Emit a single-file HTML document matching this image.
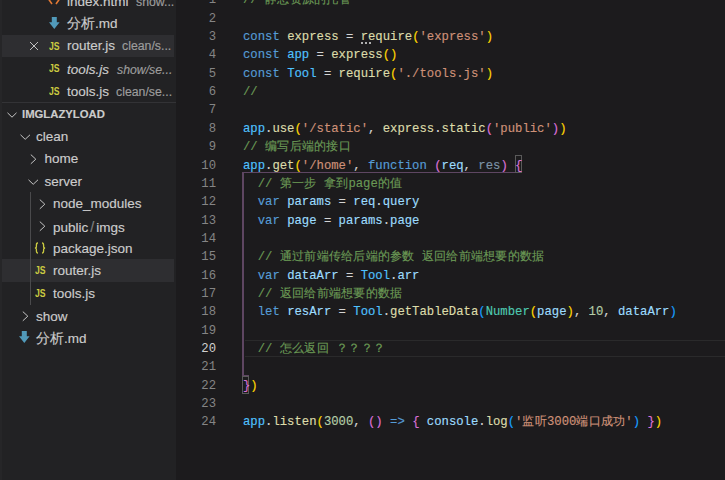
<!DOCTYPE html>
<html><head><meta charset="utf-8">
<style>
*{margin:0;padding:0;box-sizing:border-box}
html,body{width:725px;height:480px;overflow:hidden;background:#1c1b1d}
body{position:relative;font-family:"Liberation Sans",sans-serif}
#side{position:absolute;left:0;top:0;width:176px;height:480px;background:#222224;overflow:hidden}
#side .strip{position:absolute;left:0;top:0;width:2px;height:480px;background:#262628;z-index:2}
.row{-webkit-text-stroke:0.15px currentColor;position:absolute;left:0;width:174px;height:22.5px;white-space:nowrap;color:#cccccc;font-size:13.5px;line-height:22.5px}
.slash{color:#808080;margin:0 2px;font-size:14.5px;font-weight:300}
.row.sel{background:#2e2e31}
.row .t{position:absolute;top:0}
.row.ex .t{top:1px}
.row .d{color:#9d9d9d;font-size:12.3px;position:absolute;top:0}
.ic{position:absolute}
.js{font-family:"Liberation Sans",sans-serif;font-weight:bold;color:#cbcb41;font-size:9.5px;letter-spacing:-0.3px}
.sepl{position:absolute;left:0;top:102px;width:176px;height:1px;background:#333336}
.guide{position:absolute;left:30px;top:192px;width:1px;height:113px;background:#4a4a4c}
#code{position:absolute;left:0;top:0;width:725px;height:480px}
.ln{position:absolute;left:176px;width:40px;text-align:right;font-family:"Liberation Mono",monospace;font-size:12.25px;color:#858585;height:18.35px;line-height:18.35px}
.cl{-webkit-text-stroke:0.15px currentColor;position:absolute;left:243px;font-family:"Liberation Mono",monospace;font-size:12.25px;color:#d4d4d4;white-space:pre;height:18.35px;line-height:18.35px}
.ln.cur{color:#d0d0d0}
.z{letter-spacing:0.25px}
.k{color:#569cd6}.f{color:#dcdcaa}.c{color:#4fc1ff}.v{color:#9cdcfe}.s{color:#ce9178}.cm{color:#6a9955}.n{color:#b5cea8}.ty{color:#4ec9b0}
.b1{color:#ffd700}.b2{color:#da70d6}.b3{color:#179fff}.dim{color:#7c94a8}
</style></head><body>
<div id="side">
  <div class="strip"></div>
  <!-- open editors -->
  <div class="row" style="top:-9px"><svg class="ic" style="left:48px;top:3px" width="12" height="12" viewBox="0 0 12 12"><path d="M4 2 L1.2 6 L4 10 M8 2 L10.8 6 L8 10" fill="none" stroke="#e37933" stroke-width="1.6"/></svg><span class="t" style="left:67px">index.html</span><span class="d" style="left:136px">show...</span></div>
  <div class="row" style="top:11.5px"><svg class="ic" style="left:49px;top:5px" width="11" height="13" viewBox="0 0 11 13"><path d="M2.8 0 H7.8 V5.2 H10.6 L5.3 12 L0 5.2 H2.8 Z" fill="#519aba"/></svg><span class="t" style="left:67px;top:1px">分析.md</span></div>
  <div class="row sel" style="top:34.5px"><svg class="ic" style="left:29px;top:6.5px" width="10" height="10" viewBox="0 0 10 10"><path d="M1 1 L9 9 M9 1 L1 9" stroke="#c0c0c0" stroke-width="1"/></svg><svg class="ic" style="left:49px;top:7px" width="11" height="8" viewBox="0 0 11 8"><text x="0" y="7.6" textLength="10.6" lengthAdjust="spacingAndGlyphs" font-family="Liberation Sans" font-weight="bold" font-size="10.6" fill="#cbcb41">JS</text></svg><span class="t" style="left:67px">router.js</span><span class="d" style="left:122px">clean/s...</span></div>
  <div class="row" style="top:57px"><svg class="ic" style="left:49px;top:7px" width="11" height="8" viewBox="0 0 11 8"><text x="0" y="7.6" textLength="10.6" lengthAdjust="spacingAndGlyphs" font-family="Liberation Sans" font-weight="bold" font-size="10.6" fill="#cbcb41">JS</text></svg><span class="t" style="left:67px;top:2px;font-style:italic">tools.js</span><span class="d" style="left:117px;top:2px;font-style:italic">show/se...</span></div>
  <div class="row" style="top:79.5px"><svg class="ic" style="left:49px;top:7px" width="11" height="8" viewBox="0 0 11 8"><text x="0" y="7.6" textLength="10.6" lengthAdjust="spacingAndGlyphs" font-family="Liberation Sans" font-weight="bold" font-size="10.6" fill="#cbcb41">JS</text></svg><span class="t" style="left:67px;top:1px">tools.js</span><span class="d" style="left:116px;top:1px">clean/se...</span></div>
  <div class="sepl"></div>
  <!-- explorer -->
  <div class="row ex" style="top:102px"><svg class="ic" style="left:7px;top:10px" width="10" height="6" viewBox="0 0 10 6"><path d="M0.5 0.8 L5 5.2 L9.5 0.8" fill="none" stroke="#c5c5c5" stroke-width="1"/></svg><span class="t" style="left:22px;font-weight:bold;font-size:11.3px">IMGLAZYLOAD</span></div>
  <div class="row ex" style="top:124.5px"><svg class="ic" style="left:19.5px;top:9px" width="11" height="6" viewBox="0 0 11 6"><path d="M0.5 0.8 L5.2 5.3 L10 0.8" fill="none" stroke="#c5c5c5" stroke-width="1"/></svg><span class="t" style="left:36px">clean</span></div>
  <div class="row ex" style="top:147px"><svg class="ic" style="left:30px;top:6.5px" width="7" height="11" viewBox="0 0 7 11"><path d="M0.8 0.6 L5.8 5.2 L0.8 9.8" fill="none" stroke="#c5c5c5" stroke-width="1"/></svg><span class="t" style="left:44.5px">home</span></div>
  <div class="row ex" style="top:169.5px"><svg class="ic" style="left:28px;top:9px" width="11" height="6" viewBox="0 0 11 6"><path d="M0.5 0.8 L5.2 5.3 L10 0.8" fill="none" stroke="#c5c5c5" stroke-width="1"/></svg><span class="t" style="left:44.5px">server</span></div>
  <div class="row ex" style="top:192px"><svg class="ic" style="left:38.5px;top:6.5px" width="7" height="11" viewBox="0 0 7 11"><path d="M0.8 0.6 L5.8 5.2 L0.8 9.8" fill="none" stroke="#c5c5c5" stroke-width="1"/></svg><span class="t" style="left:53px">node_modules</span></div>
  <div class="row ex" style="top:214.5px"><svg class="ic" style="left:38.5px;top:6.5px" width="7" height="11" viewBox="0 0 7 11"><path d="M0.8 0.6 L5.8 5.2 L0.8 9.8" fill="none" stroke="#c5c5c5" stroke-width="1"/></svg><span class="t" style="left:53px">public<span class="slash">/</span>imgs</span></div>
  <div class="row ex" style="top:237px"><svg class="ic" style="left:34px;top:4.5px" width="13" height="12" viewBox="0 0 13 12"><path d="M4 0.8 C2.4 0.8 2.4 1.8 2.4 3.2 V4.4 C2.4 5.4 2 6 0.9 6 C2 6 2.4 6.6 2.4 7.6 V8.8 C2.4 10.2 2.4 11.2 4 11.2 M8 0.8 C9.6 0.8 9.6 1.8 9.6 3.2 V4.4 C9.6 5.4 10 6 11.1 6 C10 6 9.6 6.6 9.6 7.6 V8.8 C9.6 10.2 9.6 11.2 8 11.2" fill="none" stroke="#cbcb41" stroke-width="1.3"/></svg><span class="t" style="left:53px">package.json</span></div>
  <div class="row ex sel" style="top:258.7px;height:23.3px"><svg class="ic" style="left:35px;top:7.8px" width="11" height="8" viewBox="0 0 11 8"><text x="0" y="7.6" textLength="10.6" lengthAdjust="spacingAndGlyphs" font-family="Liberation Sans" font-weight="bold" font-size="10.6" fill="#cbcb41">JS</text></svg><span class="t" style="left:53px;top:1.8px">router.js</span></div>
  <div class="row ex" style="top:282px"><svg class="ic" style="left:35px;top:7px" width="11" height="8" viewBox="0 0 11 8"><text x="0" y="7.6" textLength="10.6" lengthAdjust="spacingAndGlyphs" font-family="Liberation Sans" font-weight="bold" font-size="10.6" fill="#cbcb41">JS</text></svg><span class="t" style="left:53px">tools.js</span></div>
  <div class="row ex" style="top:304.5px"><svg class="ic" style="left:22px;top:6.5px" width="7" height="11" viewBox="0 0 7 11"><path d="M0.8 0.6 L5.8 5.2 L0.8 9.8" fill="none" stroke="#c5c5c5" stroke-width="1"/></svg><span class="t" style="left:36px">show</span></div>
  <div class="row ex" style="top:327px"><svg class="ic" style="left:18.7px;top:4px" width="11" height="13" viewBox="0 0 11 13"><path d="M2.8 0 H7.8 V5.2 H10.6 L5.3 12 L0 5.2 H2.8 Z" fill="#519aba"/></svg><span class="t" style="left:36px">分析.md</span></div>
  <div class="guide"></div>
</div>
<div id="code">
<div class="curl" style="position:absolute;left:245px;top:339.6px;width:480px;height:17.6px;border-top:1px solid #2a2a2b;border-bottom:1px solid #2a2a2b"></div>
<div style="position:absolute;left:242px;top:172px;width:2px;height:204.5px;background:#5e4662"></div>
<div style="position:absolute;left:242px;top:172px;width:280px;height:1px;background:#5e4662"></div>
<div style="position:absolute;left:242px;top:375px;width:7px;height:1.5px;background:#5e4662"></div>
<div style="position:absolute;left:515px;top:155px;width:7px;height:18px;border:1px solid #5a5a5a"></div>
<div style="position:absolute;left:242px;top:376px;width:7px;height:18px;border:1px solid #5a5a5a"></div>
<div style="position:absolute;left:361px;top:42px;width:11px;height:1.5px;background:repeating-linear-gradient(90deg,#b0b0b0 0 1.6px,transparent 1.6px 4.2px)"></div>
<div class="ln" style="top:-8.64px">1</div>
<div class="cl" style="top:-8.64px"><span class="cm">// <span class="z">静态资源的托管</span></span></div>
<div class="ln" style="top:9.71px">2</div>
<div class="ln" style="top:28.06px">3</div>
<div class="cl" style="top:28.06px"><span class="k">const</span> <span class="f">express</span> = <span class="f">require</span><span class="b1">(</span><span class="s">'express'</span><span class="b1">)</span></div>
<div class="ln" style="top:46.41px">4</div>
<div class="cl" style="top:46.41px"><span class="k">const</span> <span class="c">app</span> = <span class="f">express</span><span class="b1">()</span></div>
<div class="ln" style="top:64.76px">5</div>
<div class="cl" style="top:64.76px"><span class="k">const</span> <span class="c">Tool</span> = <span class="f">require</span><span class="b1">(</span><span class="s">'./tools.js'</span><span class="b1">)</span></div>
<div class="ln" style="top:83.11px">6</div>
<div class="cl" style="top:83.11px"><span class="cm">//</span></div>
<div class="ln" style="top:101.46px">7</div>
<div class="ln" style="top:119.81px">8</div>
<div class="cl" style="top:119.81px"><span class="c">app</span>.<span class="f">use</span><span class="b1">(</span><span class="s">'/static'</span>, <span class="f">express</span>.<span class="f">static</span><span class="b2">(</span><span class="s">'public'</span><span class="b2">)</span><span class="b1">)</span></div>
<div class="ln" style="top:138.16px">9</div>
<div class="cl" style="top:138.16px"><span class="cm">// <span class="z">编写后端的接口</span></span></div>
<div class="ln" style="top:156.51px">10</div>
<div class="cl" style="top:156.51px"><span class="c">app</span>.<span class="f">get</span><span class="b1">(</span><span class="s">'/home'</span>, <span class="k">function</span> <span class="b2">(</span><span class="v">req</span>, <span class="dim">res</span><span class="b2">)</span> <span class="b2">{</span></div>
<div class="ln" style="top:174.86px">11</div>
<div class="cl" style="top:174.86px">  <span class="cm">// <span class="z">第一步</span> <span class="z">拿到</span>page<span class="z">的值</span></span></div>
<div class="ln" style="top:193.21px">12</div>
<div class="cl" style="top:193.21px">  <span class="k">var</span> <span class="v">params</span> = <span class="v">req</span>.<span class="v">query</span></div>
<div class="ln" style="top:211.56px">13</div>
<div class="cl" style="top:211.56px">  <span class="k">var</span> <span class="v">page</span> = <span class="v">params</span>.<span class="v">page</span></div>
<div class="ln" style="top:229.91px">14</div>
<div class="ln" style="top:248.26px">15</div>
<div class="cl" style="top:248.26px">  <span class="cm">// <span class="z">通过前端传给后端的参数</span> <span class="z">返回给前端想要的数据</span></span></div>
<div class="ln" style="top:266.61px">16</div>
<div class="cl" style="top:266.61px">  <span class="k">var</span> <span class="v">dataArr</span> = <span class="c">Tool</span>.<span class="v">arr</span></div>
<div class="ln" style="top:284.96px">17</div>
<div class="cl" style="top:284.96px">  <span class="cm">// <span class="z">返回给前端想要的数据</span></span></div>
<div class="ln" style="top:303.31px">18</div>
<div class="cl" style="top:303.31px">  <span class="k">let</span> <span class="v">resArr</span> = <span class="c">Tool</span>.<span class="f">getTableData</span><span class="b3">(</span><span class="ty">Number</span><span class="b1">(</span><span class="v">page</span><span class="b1">)</span>, <span class="n">10</span>, <span class="v">dataArr</span><span class="b3">)</span></div>
<div class="ln" style="top:321.66px">19</div>
<div class="ln cur" style="top:340.01px">20</div>
<div class="cl" style="top:340.01px">  <span class="cm">// <span class="z">怎么返回</span> <span class="z">？？？？</span></span></div>
<div class="ln" style="top:358.36px">21</div>
<div class="ln" style="top:376.71px">22</div>
<div class="cl" style="top:376.71px"><span class="b2">}</span><span class="b1">)</span></div>
<div class="ln" style="top:395.06px">23</div>
<div class="ln" style="top:413.41px">24</div>
<div class="cl" style="top:413.41px"><span class="c">app</span>.<span class="f">listen</span><span class="b1">(</span><span class="n">3000</span>, <span class="b2">()</span> <span class="k">=&gt;</span> <span class="b2">{</span> <span class="v">console</span>.<span class="f">log</span><span class="b3">(</span><span class="s">'<span class="z">监听</span>3000<span class="z">端口成功</span>'</span><span class="b3">)</span> <span class="b2">}</span><span class="b1">)</span></div>
</div>
</body></html>
